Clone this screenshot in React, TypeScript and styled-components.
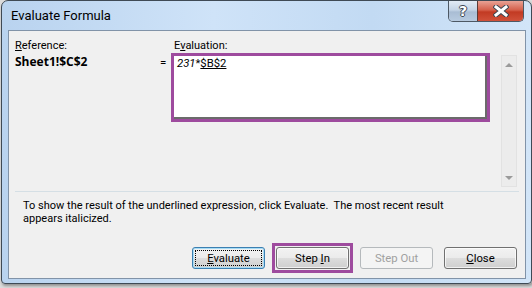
import * as React from 'react';
import styled, { createGlobalStyle } from 'styled-components';

const GlobalStyle = createGlobalStyle`
  html, body {
    margin: 0;
    padding: 0;
  }
  body {
    width: 532px;
    height: 288px;
    overflow: hidden;
    background: #dcdcdc;
    font-family: Roboto, 'Open Sans', sans-serif;
    font-size: 11px;
    color: #000;
  }
`;

const Window = styled.div`
  box-sizing: border-box;
  width: 531px;
  height: 284px;
  margin-left: 1px;
  border: 1px solid #3f4a55;
  border-radius: 7px 7px 4px 4px;
  background: linear-gradient(to right, #b9d3ef, #cfe3f8 40%, #c2daf3 70%, #d2e5f8);
  padding: 0 5px 4px 6px;
  display: flex;
  flex-direction: column;
  box-shadow: 1px 2px 3px rgba(0, 0, 0, 0.35);
`;

const TitleBar = styled.div`
  height: 29px;
  display: flex;
  align-items: flex-start;
  justify-content: space-between;
`;

const Title = styled.div`
  padding: 7px 0 0 3px;
  font-size: 13px;
  line-height: 15px;
  color: #000;
`;

const CaptionButtons = styled.div`
  display: flex;
  margin-right: 2px;
  border: 1px solid #4d5864;
  border-top: none;
  border-radius: 0 0 5px 5px;
  overflow: hidden;
  height: 20px;
`;

const CaptionButton = styled.div<{ $close?: boolean }>`
  width: ${p => (p.$close ? 45 : 28)}px;
  display: flex;
  align-items: center;
  justify-content: center;
  background: ${p =>
    p.$close
      ? 'linear-gradient(#e9a295, #d5604b 45%, #c23a23 55%, #d0513a)'
      : 'linear-gradient(#e2ebf5, #c4d4e6 45%, #a9bdd4 55%, #b8cbe0)'};
  border-left: ${p => (p.$close ? '1px solid #5b3a36' : 'none')};
  color: #fff;
  font-family: 'DejaVu Sans', sans-serif;
  font-weight: bold;
  font-size: 14px;
  text-shadow: -1px 0 #3c4753, 1px 0 #3c4753, 0 -1px #3c4753, 0 1px #3c4753;
`;

const ClientArea = styled.div`
  flex: 1;
  border: 1px solid #8193a8;
  background: #f0f0f0;
  display: flex;
  flex-direction: column;
`;

const TopGrid = styled.div`
  display: grid;
  grid-template-columns: 143px 13px 319px 16px;
  grid-template-rows: 14px 134px;
  padding: 8px 6px 0 6px;
  & > :nth-child(4n) {
    margin-left: 11px;
  }
`;

const Label = styled.div`
  line-height: 14px;
  white-space: nowrap;
`;

const EvalLabel = styled(Label)`
  padding-left: 3px;
`;

const RefValue = styled.div`
  margin-top: 2px;
  font-family: 'Open Sans', Roboto, sans-serif;
  font-weight: bold;
  font-size: 12px;
  line-height: 14px;
`;

const Equals = styled.div`
  margin-top: 2px;
  font-size: 11.5px;
  line-height: 14px;
  padding-left: 2px;
`;

const EvalBox = styled.div`
  box-sizing: border-box;
  height: 69px;
  border: 3px solid #9e4b9e;
  background: #fff;
  box-shadow: inset -2px -2px 0 #6b6b6b;
  padding: 1px 3px;
  font-size: 11.3px;
  line-height: 14px;
`;

const Italic = styled.i``;

const Under = styled.span`
  text-decoration: underline;
`;

const ScrollBar = styled.div`
  box-sizing: border-box;
  margin-top: 2px;
  width: 16px;
  height: 132px;
  border: 1px solid #e2e2e2;
  background: #ececec;
  display: flex;
  flex-direction: column;
  justify-content: space-between;
  align-items: center;
  padding: 7px 0 6px;
`;

const Arrow = styled.span<{ $down?: boolean }>`
  width: 0;
  height: 0;
  border-left: 4px solid transparent;
  border-right: 4px solid transparent;
  ${p =>
    p.$down ? 'border-top: 4px solid #9a9a9a;' : 'border-bottom: 4px solid #9a9a9a;'}
`;

const Separator = styled.div`
  margin: 4px 6px 0 6px;
  height: 1px;
  background: #d5dfe5;
`;

const Message = styled.div`
  padding: 7px 0 0 14px;
  line-height: 13px;
  white-space: pre-wrap;
`;

const ButtonRow = styled.div`
  margin-top: auto;
  display: flex;
  justify-content: flex-end;
  align-items: center;
  gap: 11px;
  padding: 0 8px 9px 0;
`;

const Button = styled.div<{ $default?: boolean; $disabled?: boolean }>`
  box-sizing: border-box;
  width: 73px;
  height: 22px;
  border: 1px solid ${p => (p.$default ? '#3c7fb1' : p.$disabled ? '#b5b9bc' : '#707070')};
  border-radius: 3px;
  background: ${p =>
    p.$disabled
      ? '#f4f4f4'
      : 'linear-gradient(#f2f2f2, #ebebeb 50%, #dddddd 50%, #cfcfcf)'};
  color: ${p => (p.$disabled ? '#a0a0a0' : '#000')};
  font-size: 11.3px;
  display: flex;
  align-items: center;
  justify-content: center;
  position: relative;
  box-shadow: inset 0 0 0 1px
    ${p => (p.$default ? '#a6dcf6' : p.$disabled ? 'transparent' : 'rgba(255,255,255,0.7)')};
`;

const Marker = styled.div`
  border: 3px solid #9e4b9e;
  padding: 1px;
  margin: -4px;
`;

const FocusRect = styled.span`
  position: absolute;
  inset: 2px;
  border: 1px dotted #000;
`;

export default function App() {
  return (
    <>
      <GlobalStyle />
      <Window>
        <TitleBar>
          <Title>Evaluate Formula</Title>
          <CaptionButtons>
            <CaptionButton>?</CaptionButton>
            <CaptionButton $close>
              <svg width="16" height="12" viewBox="0 0 16 12">
                <path
                  d="M3 2 L13 10 M13 2 L3 10"
                  stroke="#3c4753"
                  strokeWidth="5"
                  strokeLinecap="square"
                />
                <path
                  d="M3 2 L13 10 M13 2 L3 10"
                  stroke="#fff"
                  strokeWidth="3"
                  strokeLinecap="square"
                />
              </svg>
            </CaptionButton>
          </CaptionButtons>
        </TitleBar>
        <ClientArea>
          <TopGrid>
            <Label>
              <u>R</u>eference:
            </Label>
            <div />
            <EvalLabel>
              E<u>v</u>aluation:
            </EvalLabel>
            <div />
            <RefValue>Sheet1!$C$2</RefValue>
            <Equals>=</Equals>
            <div>
              <EvalBox>
                <Italic>231</Italic>*<Under>$B$2</Under>
              </EvalBox>
            </div>
            <ScrollBar>
              <Arrow />
              <Arrow $down />
            </ScrollBar>
          </TopGrid>
          <Separator />
          <Message>
            {'To show the result of the underlined expression, click Evaluate.  The most recent result\nappears italicized.'}
          </Message>
          <ButtonRow>
            <Button $default>
              <FocusRect />
              <span>
                <u>E</u>valuate
              </span>
            </Button>
            <Marker>
              <Button>
                <span>
                  Step <u>I</u>n
                </span>
              </Button>
            </Marker>
            <Button $disabled>Step Out</Button>
            <Button>
              <span>
                <u>C</u>lose
              </span>
            </Button>
          </ButtonRow>
        </ClientArea>
      </Window>
    </>
  );
}
